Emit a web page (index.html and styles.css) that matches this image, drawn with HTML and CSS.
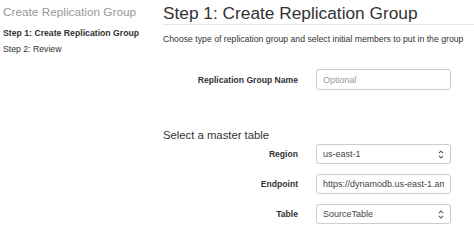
FILE: index.html
```html
<!DOCTYPE html>
<html lang="en">
<head>
    <meta charset="UTF-8">
    <meta name="viewport" content="width=device-width, initial-scale=1.0">
    <title>Create Replication Group</title>
    <link rel="stylesheet" href="styles.css">
</head>
<body>
    <div class="wizard">
        <div class="steps">
            <div class="steps_title">Create Replication Group</div>
            <div class="step current">Step 1: Create Replication Group</div>
            <div class="step">Step 2: Review</div>
        </div>

        <div class="content">
            <h1 class="content_title">Step 1: Create Replication Group</h1>
            <p class="intro">Choose type of replication group and select initial members to put in the group</p>

            <form class="groupform" onsubmit="event.preventDefault();" autocomplete="off">
                <div class="row first">
                    <label>Replication Group Name</label>
                    <input type="text" class="field" value="" placeholder="Optional">
                </div>

                <h2 class="section">Select a master table</h2>

                <div class="row">
                    <label>Region</label>
                    <div class="select">
                        <span>us-east-1</span>
                        <svg width="6" height="9" viewBox="0 0 6 9"><path d="M1 3.2 L3 1 L5 3.2 M1 5.8 L3 8 L5 5.8" fill="none" stroke="#555" stroke-width="1.1"/></svg>
                    </div>
                </div>
                <div class="row">
                    <label>Endpoint</label>
                    <input type="text" class="field" value="https://dynamodb.us-east-1.amazonaws.com">
                </div>
                <div class="row">
                    <label>Table</label>
                    <div class="select">
                        <span>SourceTable</span>
                        <svg width="6" height="9" viewBox="0 0 6 9"><path d="M1 3.2 L3 1 L5 3.2 M1 5.8 L3 8 L5 5.8" fill="none" stroke="#555" stroke-width="1.1"/></svg>
                    </div>
                </div>
            </form>
        </div>
    </div>
</body>
</html>
```

FILE: styles.css
```css
body{
  margin:0;
  font-family:"Liberation Sans", Arial, sans-serif;
  color:#333;
  background:#fff;
}
.wizard{
  display:flex;
}
.steps{
  flex-shrink:0;
  width:160px;
  padding:5px 0 0 3px;
}
.steps_title{
  font-size:11.8px;
  color:#999;
  line-height:15px;
}
.step{
  font-size:8.7px;
  line-height:12px;
  margin-top:4px;
}
.step.current{
  font-weight:bold;
  margin-top:7px;
}
.content{
  flex:1;
  min-width:0;
  padding-top:3px;
}
.content_title{
  font-size:17.3px;
  font-weight:normal;
  line-height:20px;
  margin:0;
  padding-bottom:1px;
  border-bottom:solid 1px #e5e5e5;
}
.intro{
  font-size:8.7px;
  margin:8px 0 0;
  line-height:12px;
  white-space:nowrap;
}
.groupform{
  margin-top:24px;
}
.row{
  display:flex;
  align-items:center;
  margin-bottom:10px;
}
.row label{
  width:135px;
  text-align:right;
  font-size:8.6px;
  font-weight:bold;
  margin-right:18px;
}
.field, .select{
  box-sizing:border-box;
  width:135px;
  height:20px;
  border:solid 1px #ccc;
  border-radius:3px;
  padding:0 6px;
  font-family:"Liberation Sans", Arial, sans-serif;
  font-size:9px;
  color:#444;
  background:#fff;
}
.row.first .field{
  height:21px;
}
.field::placeholder{
  color:#999;
}
.select{
  display:flex;
  align-items:center;
  justify-content:space-between;
}
.section{
  font-size:11.3px;
  font-weight:normal;
  margin:38px 0 2px;
  line-height:14px;
}
```
